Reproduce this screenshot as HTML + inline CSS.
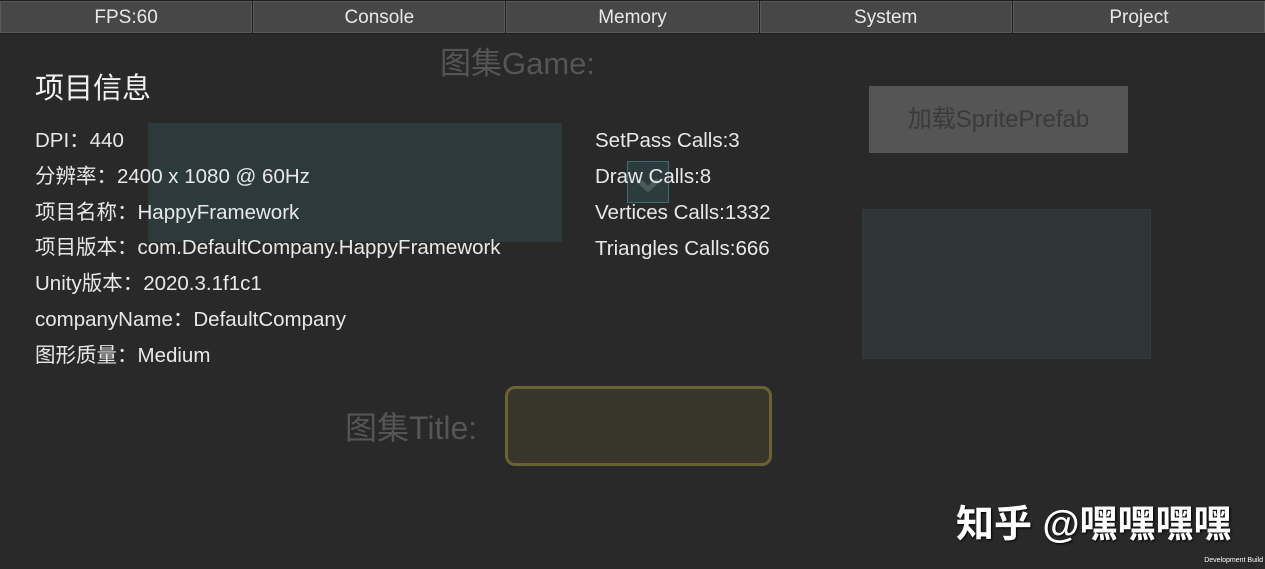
<!DOCTYPE html>
<html><head><meta charset="utf-8"><style>
body{margin:0;width:1265px;height:569px;background:#292929;overflow:hidden;position:relative;font-family:"Liberation Sans","Noto Sans CJK SC",sans-serif;color:#e8e8e8}
.tabs{position:absolute;top:0;left:0;width:1265px;height:34px;display:flex;background:#1e1e1e}
.tab{flex:1;margin:1px 1px 1px 0;background:#474747;border:1px solid #5a5a5a;box-sizing:border-box;text-align:center;line-height:32px;font-size:19px;color:#e8e8e8}
.a{position:absolute;white-space:nowrap}
.l{font-size:20.5px;left:35px;line-height:24px}
.r{font-size:20.5px;left:595px;line-height:24px}
</style></head><body>
<div class="tabs"><div class="tab">FPS:60</div><div class="tab">Console</div><div class="tab">Memory</div><div class="tab">System</div><div class="tab" style="margin-right:0">Project</div></div>
<div class="a" style="left:148px;top:123px;width:414px;height:119px;background:#2c3a3c"></div>
<div class="a" style="left:627px;top:161px;width:42px;height:42px;border:1px solid #3e6b70;background:#2c3c3e;box-sizing:border-box"></div>
<svg class="a" style="left:635px;top:178px" width="26" height="14"><path d="M3 2 L13 11 L23 2" stroke="#4d5a5b" stroke-width="5" fill="none"/></svg>
<div class="a" style="left:440px;top:38px;font-size:31px;color:#555">图集Game:</div>
<div class="a" style="left:35px;top:65px;font-size:29px;color:#f0f0f0">项目信息</div>
<div class="a l" style="top:129px">DPI：440</div>
<div class="a l" style="top:165px">分辨率：2400 x 1080 @ 60Hz</div>
<div class="a l" style="top:201px">项目名称：HappyFramework</div>
<div class="a l" style="top:236px">项目版本：com.DefaultCompany.HappyFramework</div>
<div class="a l" style="top:272px">Unity版本：2020.3.1f1c1</div>
<div class="a l" style="top:308px">companyName：DefaultCompany</div>
<div class="a l" style="top:344px">图形质量：Medium</div>
<div class="a r" style="top:129px">SetPass Calls:3</div>
<div class="a r" style="top:165px">Draw Calls:8</div>
<div class="a r" style="top:201px">Vertices Calls:1332</div>
<div class="a r" style="top:237px">Triangles Calls:666</div>
<div class="a" style="left:869px;top:86px;width:259px;height:67px;background:#555;text-align:center;line-height:67px;font-size:24px;color:#3a3a3a">加载SpritePrefab</div>
<div class="a" style="left:862px;top:209px;width:289px;height:150px;background:#2d3537;border:1px solid #303c3e;box-sizing:border-box"></div>
<div class="a" style="left:345px;top:403px;font-size:32px;color:#555">图集Title:</div>
<div class="a" style="left:505px;top:386px;width:267px;height:80px;border:3px solid #6b6234;border-radius:10px;background:#38352a;box-sizing:border-box"></div>
<div class="a" style="left:956px;top:493px;font-size:38px;font-weight:bold;color:#fff;text-shadow:1px 1px 2px #000">知乎 @嘿嘿嘿嘿</div>
<div class="a" style="right:2px;top:557px;font-size:7px;color:#fff;font-family:'Liberation Sans Narrow','Liberation Sans',sans-serif">Development Build</div>
</body></html>
